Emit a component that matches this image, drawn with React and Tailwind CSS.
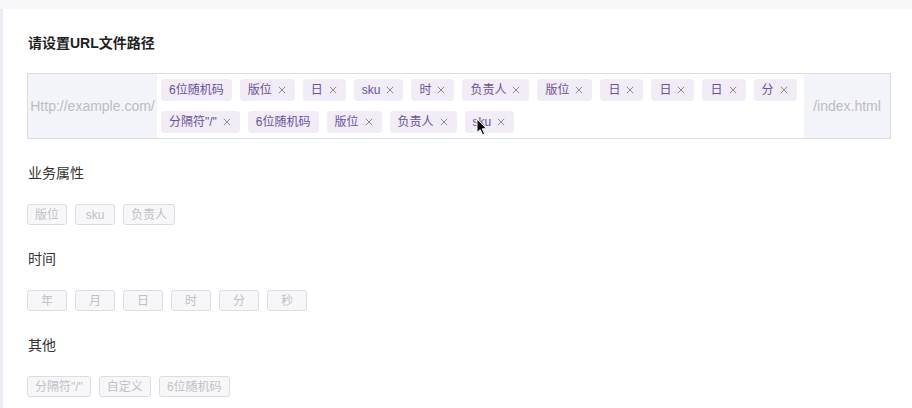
import React from 'react';

const font = { fontFamily: '"Liberation Sans", "Noto Sans CJK SC", sans-serif' };

const pathTags = [
  { label: '6位随机码', closable: false },
  { label: '版位', closable: true },
  { label: '日', closable: true },
  { label: 'sku', closable: true },
  { label: '时', closable: true },
  { label: '负责人', closable: true },
  { label: '版位', closable: true },
  { label: '日', closable: true },
  { label: '日', closable: true },
  { label: '日', closable: true },
  { label: '分', closable: true },
  { label: '分隔符"/"', closable: true },
  { label: '6位随机码', closable: false },
  { label: '版位', closable: true },
  { label: '负责人', closable: true },
  { label: 'sku', closable: true },
];

const groups = [
  { title: '业务属性', items: ['版位', 'sku', '负责人'] },
  { title: '时间', items: ['年', '月', '日', '时', '分', '秒'] },
  { title: '其他', items: ['分隔符"/"', '自定义', '6位随机码'] },
];

function CloseIcon() {
  return (
    <svg width="8" height="8" viewBox="0 0 8 8" className="shrink-0">
      <path d="M0.8 0.8 L7.2 7.2 M7.2 0.8 L0.8 7.2" stroke="#8c8c8c" strokeWidth="1" fill="none" />
    </svg>
  );
}

function PathTag({ label, closable }) {
  return (
    <span
      className={
        closable
          ? 'flex items-center gap-[6px] h-[22px] pl-[8px] pr-[9px] rounded-[4px] bg-[#f1ecf6] text-[12px] text-[#6a519b] leading-none whitespace-nowrap'
          : 'flex items-center h-[22px] px-[8px] rounded-[4px] bg-[#f1ecf6] text-[12px] text-[#6a519b] leading-none whitespace-nowrap'
      }
    >
      {label}
      {closable && <CloseIcon />}
    </span>
  );
}

function Cursor() {
  return (
    <svg
      width="12"
      height="18"
      viewBox="0 0 12 18"
      className="absolute left-[476px] top-[118px] pointer-events-none"
    >
      <path
        d="M1 1 L1 14.5 L4.2 11.6 L6.6 16.8 L8.6 15.9 L6.3 10.8 L10.6 10.8 Z"
        fill="#000"
        stroke="#fff"
        strokeWidth="1"
        strokeLinejoin="round"
      />
    </svg>
  );
}

export default function App() {
  return (
    <div className="relative w-[912px] h-[408px] overflow-hidden bg-[#f8f8fa] pt-[9px]" style={font}>
      <div className="h-full bg-white border-l-[3px] border-[#ececf4] pl-[24px] pr-[21px] pt-[24px]">
        <h3 className="text-[14px] leading-[20px] font-bold text-[#1f1f1f] pl-[1px]">
          请设置URL文件路径
        </h3>

        <div className="mt-[20px] flex border border-[#d9dce3]">
          <div className="w-[129px] shrink-0 flex items-center justify-center bg-[#f3f4f9] text-[14px] text-[#bcbcc2]">
            Http://example.com/
          </div>
          <div className="flex-1 flex flex-wrap gap-x-[8px] gap-y-[10px] py-[5px] pl-[4px] pr-[2px]">
            {pathTags.map((t, i) => (
              <PathTag key={i} label={t.label} closable={t.closable} />
            ))}
          </div>
          <div className="w-[86px] shrink-0 flex items-center justify-center bg-[#f3f4f9] text-[14px] text-[#bcbcc2]">
            /index.html
          </div>
        </div>

        {groups.map((g) => (
          <div key={g.title} className="mt-[24px]">
            <div className="text-[14px] leading-[20px] text-[#333] pl-[1px]">{g.title}</div>
            <div className="mt-[21px] flex gap-[8px]">
              {g.items.map((item) => (
                <button
                  key={item}
                  type="button"
                  className="h-[21px] min-w-[40px] px-[7px] flex items-center justify-center rounded-[3px] border border-[#dcdce2] bg-[#f7f7f9] text-[12px] text-[#bfbfc4] leading-none whitespace-nowrap"
                >
                  {item}
                </button>
              ))}
            </div>
          </div>
        ))}
      </div>
      <Cursor />
    </div>
  );
}
